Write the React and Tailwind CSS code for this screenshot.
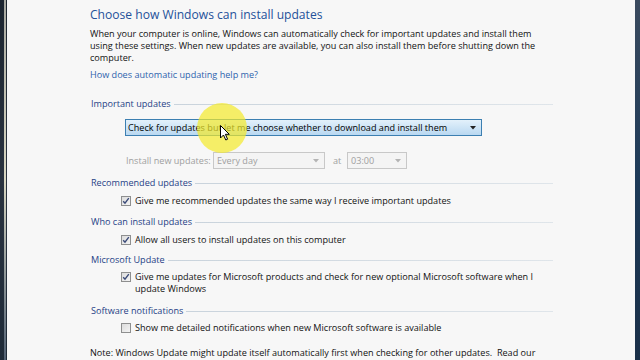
import React from "react";

function Heading({ children, mt }) {
  return (
    <div className={`flex items-center h-[12px] ${mt}`}>
      <span className="text-[#1f3f86] whitespace-nowrap leading-[12px] ml-[1px]">{children}</span>
      <div className="flex-1 h-px ml-[3px] bg-gradient-to-r from-[#c9d3dc] to-[#dfe5ea]" />
    </div>
  );
}

function Check({ checked }) {
  return (
    <div className="w-[10px] h-[10px] border border-[#8e8f8f] bg-gradient-to-br from-[#dcdcdc] to-[#f4f4f4] flex items-center justify-center shrink-0">
      {checked && (
        <svg width="8" height="8" viewBox="0 0 8 8">
          <path d="M1.2 4.2 L3 6.2 L6.8 1.2" fill="none" stroke="#3a4a78" strokeWidth="1.4" />
        </svg>
      )}
    </div>
  );
}

function Select({ w, children }) {
  return (
    <div
      className={`${w} h-[17px] border border-[#c8c8c8] bg-[#f4f4f4] flex items-center justify-between pl-[3px] pr-[5px] text-[#a0a0a0]`}
    >
      <span>{children}</span>
      <svg width="6" height="4" viewBox="0 0 6 4">
        <path d="M0 0 H6 L3 3.5 Z" fill="#b4b4b4" />
      </svg>
    </div>
  );
}

export default function App() {
  return (
    <div
      className="w-[640px] h-[360px] overflow-hidden flex bg-[#f7f7f7] text-[9.1px] text-[#121212] relative"
      style={{ fontFamily: '"Open Sans", "Noto Sans", sans-serif' }}
    >
      <div className="w-[7px] h-full bg-gradient-to-b from-[#1c2530] via-[#2a3340] to-[#1e2a38] flex">
        <div className="w-[4px]" />
        <div className="w-[2px] h-full bg-gradient-to-b from-[#a6a7a0] via-[#d9d7c2] to-[#516072]" />
      </div>
      <div className="flex-1 pl-[83px]">
        <div className="w-[463px]">
          <div className="mt-[6px] h-[17px] leading-[17px] text-[12.1px] text-[#24519a] whitespace-nowrap">
            Choose how Windows can install updates
          </div>
          <div className="mt-[5px] leading-[12px] whitespace-nowrap">
            When your computer is online, Windows can automatically check for important updates and install them
            <br />
            using these settings. When new updates are available, you can also install them before shutting down the
            <br />
            computer.
          </div>
          <div className="mt-[5px] h-[12px] leading-[12px] text-[#2d63ad]">How does automatic updating help me?</div>

          <Heading mt="mt-[17px]">Important updates</Heading>

          <div className="mt-[9px] ml-[35px] w-[357px] h-[17px] border border-[#3c7fb1] bg-gradient-to-b from-[#e3f1fb] to-[#b9d8f1] flex items-center justify-between pl-[2px] pr-[5px] text-black">
            <span className="whitespace-nowrap">Check for updates but let me choose whether to download and install them</span>
            <svg width="6" height="4" viewBox="0 0 6 4">
              <path d="M0 0 H6 L3 3.5 Z" fill="#222" />
            </svg>
          </div>

          <div className="mt-[16px] ml-[36px] flex items-center text-[#a0a0a0]">
            <span className="w-[87px] whitespace-nowrap">Install new updates:</span>
            <Select w="w-[112px]">Every day</Select>
            <span className="ml-[8px] w-[14px]">at</span>
            <Select w="w-[60px]">03:00</Select>
          </div>

          <Heading mt="mt-[8px]">Recommended updates</Heading>
          <div className="mt-[6px] ml-[31px] flex items-center h-[12px] gap-[4px]">
            <Check checked />
            <span className="whitespace-nowrap">Give me recommended updates the same way I receive important updates</span>
          </div>

          <Heading mt="mt-[9px]">Who can install updates</Heading>
          <div className="mt-[6px] ml-[31px] flex items-center h-[12px] gap-[4px]">
            <Check checked />
            <span className="whitespace-nowrap">Allow all users to install updates on this computer</span>
          </div>

          <Heading mt="mt-[8px]">Microsoft Update</Heading>
          <div className="mt-[5px] ml-[31px] flex items-start gap-[4px]">
            <div className="mt-[1px]">
              <Check checked />
            </div>
            <span className="leading-[12px] whitespace-nowrap">
              Give me updates for Microsoft products and check for new optional Microsoft software when I
              <br />
              update Windows
            </span>
          </div>

          <Heading mt="mt-[10px]">Software notifications</Heading>
          <div className="mt-[5px] ml-[31px] flex items-center h-[12px] gap-[4px]">
            <Check />
            <span className="whitespace-nowrap">Show me detailed notifications when new Microsoft software is available</span>
          </div>

          <div className="mt-[13px] h-[12px] leading-[12px] whitespace-nowrap">
            Note: Windows Update might update itself automatically first when checking for other updates.&nbsp; Read our
          </div>
        </div>
      </div>
      <div className="w-[5px] h-full bg-gradient-to-b from-[#3a4a5e] via-[#1d3a58] to-[#1a2f48]" />

      <div className="absolute left-[197px] top-[103px] w-[50px] h-[50px] rounded-full bg-[#f3ea2a] opacity-70" />
      <svg className="absolute left-[220px] top-[125px]" width="10" height="16" viewBox="0 0 10 16">
        <path d="M0.5 0.5 V13 L3.5 10 L5.8 15 L7.6 14.2 L5.4 9.3 H9.3 Z" fill="#fff" stroke="#000" strokeWidth="1" />
      </svg>
    </div>
  );
}
